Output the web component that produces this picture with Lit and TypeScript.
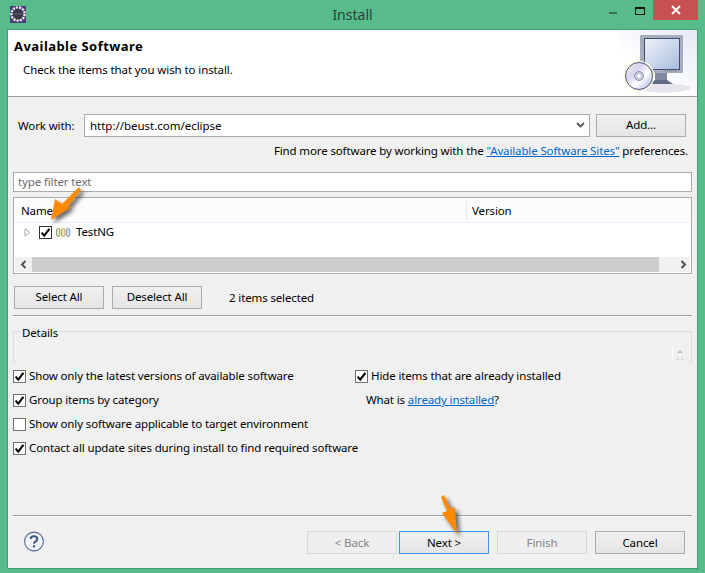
import { LitElement, html, css, svg } from "lit";
import { customElement } from "lit/decorators.js";

const check = svg`<path d="M2.6 6.6 L5.2 9.6 L10.4 2.8" fill="none" stroke="#000" stroke-width="2.1"/>`;

@customElement("app-root")
export class AppRoot extends LitElement {
  static styles = css`
    :host {
      display: block;
      width: 705px;
      height: 573px;
      font-family: "Noto Sans", "Open Sans", sans-serif;
      font-size: 11.5px;
      letter-spacing: -0.13px;
      color: #000;
    }
    * { box-sizing: border-box; }
    .frame {
      position: relative;
      width: 705px;
      height: 573px;
      background: #58bb8a;
      display: flex;
      flex-direction: column;
      overflow: hidden;
    }
    .titlebar {
      height: 29px;
      flex: none;
      display: grid;
      grid-template-columns: 1fr auto 1fr;
      align-items: start;
    }
    .appicon { margin: 6px 0 0 10px; display: block; }
    .wtitle { font-size: 14px; letter-spacing: 0; color: #2f3f38; margin-top: 5px; line-height: 20px; }
    .wbtns { display: flex; justify-content: flex-end; align-items: start; margin-right: 7px; }
    .wmin { width: 8px; height: 2px; margin: 12px 0 0; background: #3e6f59; }
    .wmax { width: 10px; height: 8px; margin: 7px 0 0 18px; border: 1px solid #111; border-top-width: 2px; }
    .wclose {
      width: 45px; height: 20px; margin-left: 8px;
      background: #c75050;
      display: flex; align-items: center; justify-content: center;
    }
    .client {
      margin: 0 7px 4px;
      flex: 1;
      border: 1px solid #479b72;
      background: #f0f0f0;
      display: flex;
      flex-direction: column;
      min-height: 0;
    }
    .head {
      height: 67px;
      flex: none;
      background: #fff;
      border-bottom: 1px solid #a0a0a0;
      display: flex;
      justify-content: space-between;
    }
    .head-text { padding: 7px 0 0 6px; }
    .head-title { font-weight: 700; font-size: 13px; line-height: 18px; letter-spacing: 0.45px; }
    .head-sub { margin: 7px 0 0 9px; line-height: 16px; letter-spacing: -0.1px; }
    .wiz { display: block; }

    .work { display: flex; margin: 17px 10px 0; height: 23px; align-items: center; }
    .work-label { width: 66px; padding-bottom: 1px; }
    .combo {
      width: 506px; height: 23px;
      background: #fff; border: 1px solid #ababab;
      display: flex; align-items: center; justify-content: space-between;
      padding: 0 4px 1px 5px;
      letter-spacing: -0.02px;
    }
    .add { margin-left: 6px; }
    .btn {
      width: 90px; height: 23px; flex: none;
      border: 1px solid #acacac;
      background: linear-gradient(#f0f0f0, #e5e5e5);
      display: flex; align-items: center; justify-content: center;
      line-height: 16px;
      padding-bottom: 1px;
    }
    .btn.off { border-color: #d9d9d9; background: #efefef; color: #838383; }
    .btn.def { border-color: #3c94ef; }
    .more { margin: 6px 9px 0 0; text-align: right; line-height: 16px; }
    a { color: #0066cc; text-decoration: underline; }
    .filter {
      margin: 13px 5px 0;
      height: 20px;
      background: #fff; border: 1px solid #ababab;
      color: #6d6d6d;
      padding-left: 4px;
      line-height: 18px;
    }
    .tree {
      margin: 5px 5px 0;
      height: 77px;
      background: #fff;
      border: 1px solid #ababab;
      display: flex;
      flex-direction: column;
    }
    .thead {
      height: 25px; flex: none;
      background: #fcfcfc;
      border-bottom: 1px solid #e5eeff;
      display: grid;
      grid-template-columns: 452px 1fr;
      line-height: 26px;
    }
    .thead div:first-child { padding-left: 7px; }
    .thead div:last-child { border-left: 1px solid #e8e8e8; padding-left: 5px; margin: 3px 0; line-height: 20px; }
    .trow { flex: 1; display: flex; align-items: flex-start; padding-top: 1px; line-height: 16px; }
    .twist { margin: 4px 0 0 10px; display: block; }
    .trow .cb { margin: 2px 4px 0 8px; }
    .bundles { margin: 4px 5px 0 0; display: block; }
    .hbar { height: 15px; flex: none; margin: 0 1px 1px; background: #f0f0f0; display: flex; align-items: stretch; }
    .hbar-btn { width: 17px; flex: none; display: flex; align-items: center; justify-content: center; }
    .hbar-thumb { width: 627px; flex: none; background: #cdcdcd; }
    .hbar-rest { flex: 1; display: flex; align-items: center; justify-content: flex-end; padding-right: 3px; }
    .cb {
      width: 13px; height: 13px; flex: none;
      background: #fff; border: 1px solid #707070;
      display: block;
      position: relative;
    }
    .cb svg { position: absolute; left: -1px; top: -1px; }
    .cb.dark { border-color: #333; }
    .selrow { display: flex; align-items: center; margin: 12px 0 0 6px; height: 23px; }
    .selrow .btn + .btn { margin-left: 8px; }
    .selcount { margin-left: 27px; padding-bottom: 1px; }
    .sep { height: 2px; flex: none; margin: 6px 5px 0; border-top: 1px solid #a0a0a0; border-bottom: 1px solid #fff; }
    .sep.foot-sep { margin-top: 0; }
    .details {
      position: relative;
      margin: 14px 5px 0;
      height: 31px;
      border: 1px solid #dcdcdc;
      border-bottom: none;
    }
    .details-label {
      position: absolute; left: 6px; top: -7px;
      background: #f0f0f0; padding: 0 3px 0 2px; line-height: 16px;
    }
    .details-scroll { position: absolute; right: 3px; top: 15px; display: block; }
    .details-stub {
      position: absolute; bottom: 0; width: 2px; height: 1px; background: #dcdcdc;
    }
    .stub-l { left: 0; }
    .stub-r { right: 0; }
    .opts {
      margin: 2px 0 0 5px;
      display: grid;
      grid-template-columns: 342px 1fr;
      grid-auto-rows: 24px;
      align-items: center;
    }
    .opt { display: flex; align-items: center; gap: 3px; line-height: 16px; white-space: nowrap; }
    .opt-col { grid-column: 1; }
    .what { padding-left: 11px; line-height: 16px; }
    .grow { flex: 1; }
    .foot { height: 51px; flex: none; display: flex; padding: 14px 12px 0 16px; }
    .help { display: block; margin-top: 0; }
    .foot-btns { margin-left: auto; display: flex; }
    .foot-btns .btn { padding: 1px 0 0; }
    .foot-btns .btn + .btn { margin-left: 8px; }
    .foot-btns .btn.def { margin-left: 2px; }
    .arrows { position: absolute; left: 0; top: 0; pointer-events: none; }
    .arrow { fill: #ff8a00; filter: drop-shadow(3px 3px 2px rgba(0,0,0,.6)); }
  `;

  private box(on: boolean, dark = false) {
    return html`<span class="cb ${dark ? "dark" : ""}">${on
      ? html`<svg width="13" height="13" viewBox="0 0 13 13">${check}</svg>`
      : ""}</span>`;
  }

  private opt(label: string, on: boolean) {
    return html`<div class="opt">${this.box(on)}<span>${label}</span></div>`;
  }

  render() {
    return html`
      <div class="frame">
        <div class="titlebar">
          <svg class="appicon" width="16" height="17" viewBox="0 0 16 17">
            <rect width="16" height="17" fill="#4b3a7c"/>
            <circle cx="8" cy="8" r="6.6" fill="none" stroke="#e8e8e8" stroke-width="2.4" stroke-dasharray="2.2 1"/>
            <circle cx="8" cy="8" r="5" fill="#3a3a44"/>
            <rect x="3.5" y="7.5" width="9" height="1" fill="#6b6390"/>
          </svg>
          <div class="wtitle">Install</div>
          <div class="wbtns">
            <div class="wmin"></div>
            <div class="wmax"></div>
            <div class="wclose">
              <svg width="10" height="10" viewBox="0 0 10 10"><path d="M1 1 L9 9 M9 1 L1 9" stroke="#fff" stroke-width="2"/></svg>
            </div>
          </div>
        </div>
        <div class="client">
          <div class="head">
            <div class="head-text">
              <div class="head-title">Available Software</div>
              <div class="head-sub">Check the items that you wish to install.</div>
            </div>
            <svg class="wiz" width="78" height="66" viewBox="0 0 78 66">
              <defs>
                <linearGradient id="bg" x1="0" y1="1" x2="1" y2="0">
                  <stop offset="0.35" stop-color="#fff"/>
                  <stop offset="1" stop-color="#e3e9f6"/>
                </linearGradient>
                <linearGradient id="scr" x1="0" y1="0" x2="1" y2="1">
                  <stop offset="0" stop-color="#eef2fa"/>
                  <stop offset="1" stop-color="#a9bddd"/>
                </linearGradient>
                <linearGradient id="disc" x1="0" y1="0" x2="1" y2="1">
                  <stop offset="0" stop-color="#f3f0c8"/>
                  <stop offset="0.35" stop-color="#d8d4f4"/>
                  <stop offset="0.6" stop-color="#ffffff"/>
                  <stop offset="1" stop-color="#a9a5e0"/>
                </linearGradient>
              </defs>
              <rect width="78" height="66" fill="url(#bg)"/>
              <ellipse cx="44" cy="58" rx="28" ry="4.5" fill="#e4dfe8" opacity=".85"/>
              <rect x="21" y="5" width="43" height="38" fill="#a7adbb"/>
              <rect x="25" y="8" width="36" height="32" fill="#3f4f78"/>
              <rect x="26" y="9" width="34" height="30" fill="url(#scr)"/>
              <path d="M46 41 h12" stroke="#6d7488" stroke-width="1" stroke-dasharray="1 1"/>
              <rect x="36" y="43" width="12" height="7" fill="#7f889d"/>
              <path d="M36 50 h12 l6 4 h-24z" fill="#5e6a85"/>
              <circle cx="20" cy="46" r="15.5" fill="#fbf9d8" opacity=".8"/>
              <circle cx="20" cy="46" r="13.5" fill="url(#disc)" stroke="#4c5a86" stroke-width="1"/>
              <circle cx="20" cy="46" r="4.5" fill="#c9ccd8" stroke="#8c92a8"/>
              <circle cx="20" cy="46" r="1.8" fill="#fff"/>
            </svg>
          </div>

          <div class="work">
            <div class="work-label">Work with:</div>
            <div class="combo">
              <span>http://beust.com/eclipse</span>
              <svg width="9" height="6" viewBox="0 0 9 6"><path d="M1 1 L4.5 4.5 L8 1" fill="none" stroke="#555" stroke-width="1.8"/></svg>
            </div>
            <div class="btn add">Add...</div>
          </div>
          <div class="more">Find more software by working with the <a>"Available Software Sites"</a> preferences.</div>

          <div class="filter">type filter text</div>

          <div class="tree">
            <div class="thead"><div>Name</div><div>Version</div></div>
            <div class="trow">
              <svg class="twist" width="7" height="9" viewBox="0 0 7 9"><path d="M1 .8 L5.8 4.5 L1 8.2z" fill="#fff" stroke="#a6a6a6"/></svg>
              ${this.box(true, true)}
              <svg class="bundles" width="15" height="9" viewBox="0 0 15 9">
                <rect x=".5" y=".5" width="3.4" height="8" rx="1.5" fill="#dfe8c8" stroke="#8aa56a"/>
                <rect x="5.5" y=".5" width="3.4" height="8" rx="1.5" fill="#f2e6b8" stroke="#c6a452"/>
                <rect x="10.5" y=".5" width="3.4" height="8" rx="1.5" fill="#d4e0f2" stroke="#7c96c4"/>
              </svg>
              <span>TestNG</span>
            </div>
            <div class="hbar">
              <div class="hbar-btn"><svg width="7" height="9" viewBox="0 0 7 9"><path d="M5.5 1 L2 4.5 L5.5 8" fill="none" stroke="#505050" stroke-width="2"/></svg></div>
              <div class="hbar-thumb"></div>
              <div class="hbar-rest"><svg width="7" height="9" viewBox="0 0 7 9"><path d="M1.5 1 L5 4.5 L1.5 8" fill="none" stroke="#505050" stroke-width="2"/></svg></div>
            </div>
          </div>

          <div class="selrow">
            <div class="btn">Select All</div>
            <div class="btn">Deselect All</div>
            <div class="selcount">2 items selected</div>
          </div>

          <div class="sep"></div>

          <div class="details">
            <div class="details-label">Details</div>
            <svg class="details-scroll" width="16" height="15" viewBox="0 0 16 15">
              <rect x="0" y="0" width="1" height="15" fill="#fff"/>
              <path d="M5 6 L8 3 L11 6z" fill="#bdbdbd"/>
              <path d="M5 11 L7 13 H5z M11 11 L9 13 H11z" fill="#bdbdbd"/>
            </svg>
            <div class="details-stub stub-l"></div>
            <div class="details-stub stub-r"></div>
          </div>

          <div class="opts">
            ${this.opt("Show only the latest versions of available software", true)}
            ${this.opt("Hide items that are already installed", true)}
            ${this.opt("Group items by category", true)}
            <div class="what">What is <a>already installed</a>?</div>
            <div class="opt-col">${this.opt("Show only software applicable to target environment", false)}</div>
            <div class="opt-col">${this.opt("Contact all update sites during install to find required software", true)}</div>
          </div>

          <div class="grow"></div>
          <div class="sep foot-sep"></div>

          <div class="foot">
            <svg class="help" width="20" height="21" viewBox="0 0 20 21">
              <circle cx="10" cy="10.5" r="9.4" fill="#f4f5f8" stroke="#53688f" stroke-width="1.1"/>
              <path d="M6.7 8 C6.7 4.4 13.3 4.4 13.3 8 C13.3 10.4 10 10.2 10 12.8" fill="none" stroke="#41598a" stroke-width="2.1"/>
              <rect x="8.9" y="14.2" width="2.2" height="2.3" fill="#41598a"/>
            </svg>
            <div class="foot-btns">
              <div class="btn off">&lt; Back</div>
              <div class="btn def">Next &gt;</div>
              <div class="btn off">Finish</div>
              <div class="btn">Cancel</div>
            </div>
          </div>
        </div>

        <svg class="arrows" width="705" height="573" viewBox="0 0 705 573">
          <polygon class="arrow" points="51,220 55,199 62,204 79,187 81,190 67,208 73,206"/>
          <polygon class="arrow" points="457,534 442,513 447,511 441,497 444,495 451,509 455,507"/>
        </svg>
      </div>
    `;
  }
}
